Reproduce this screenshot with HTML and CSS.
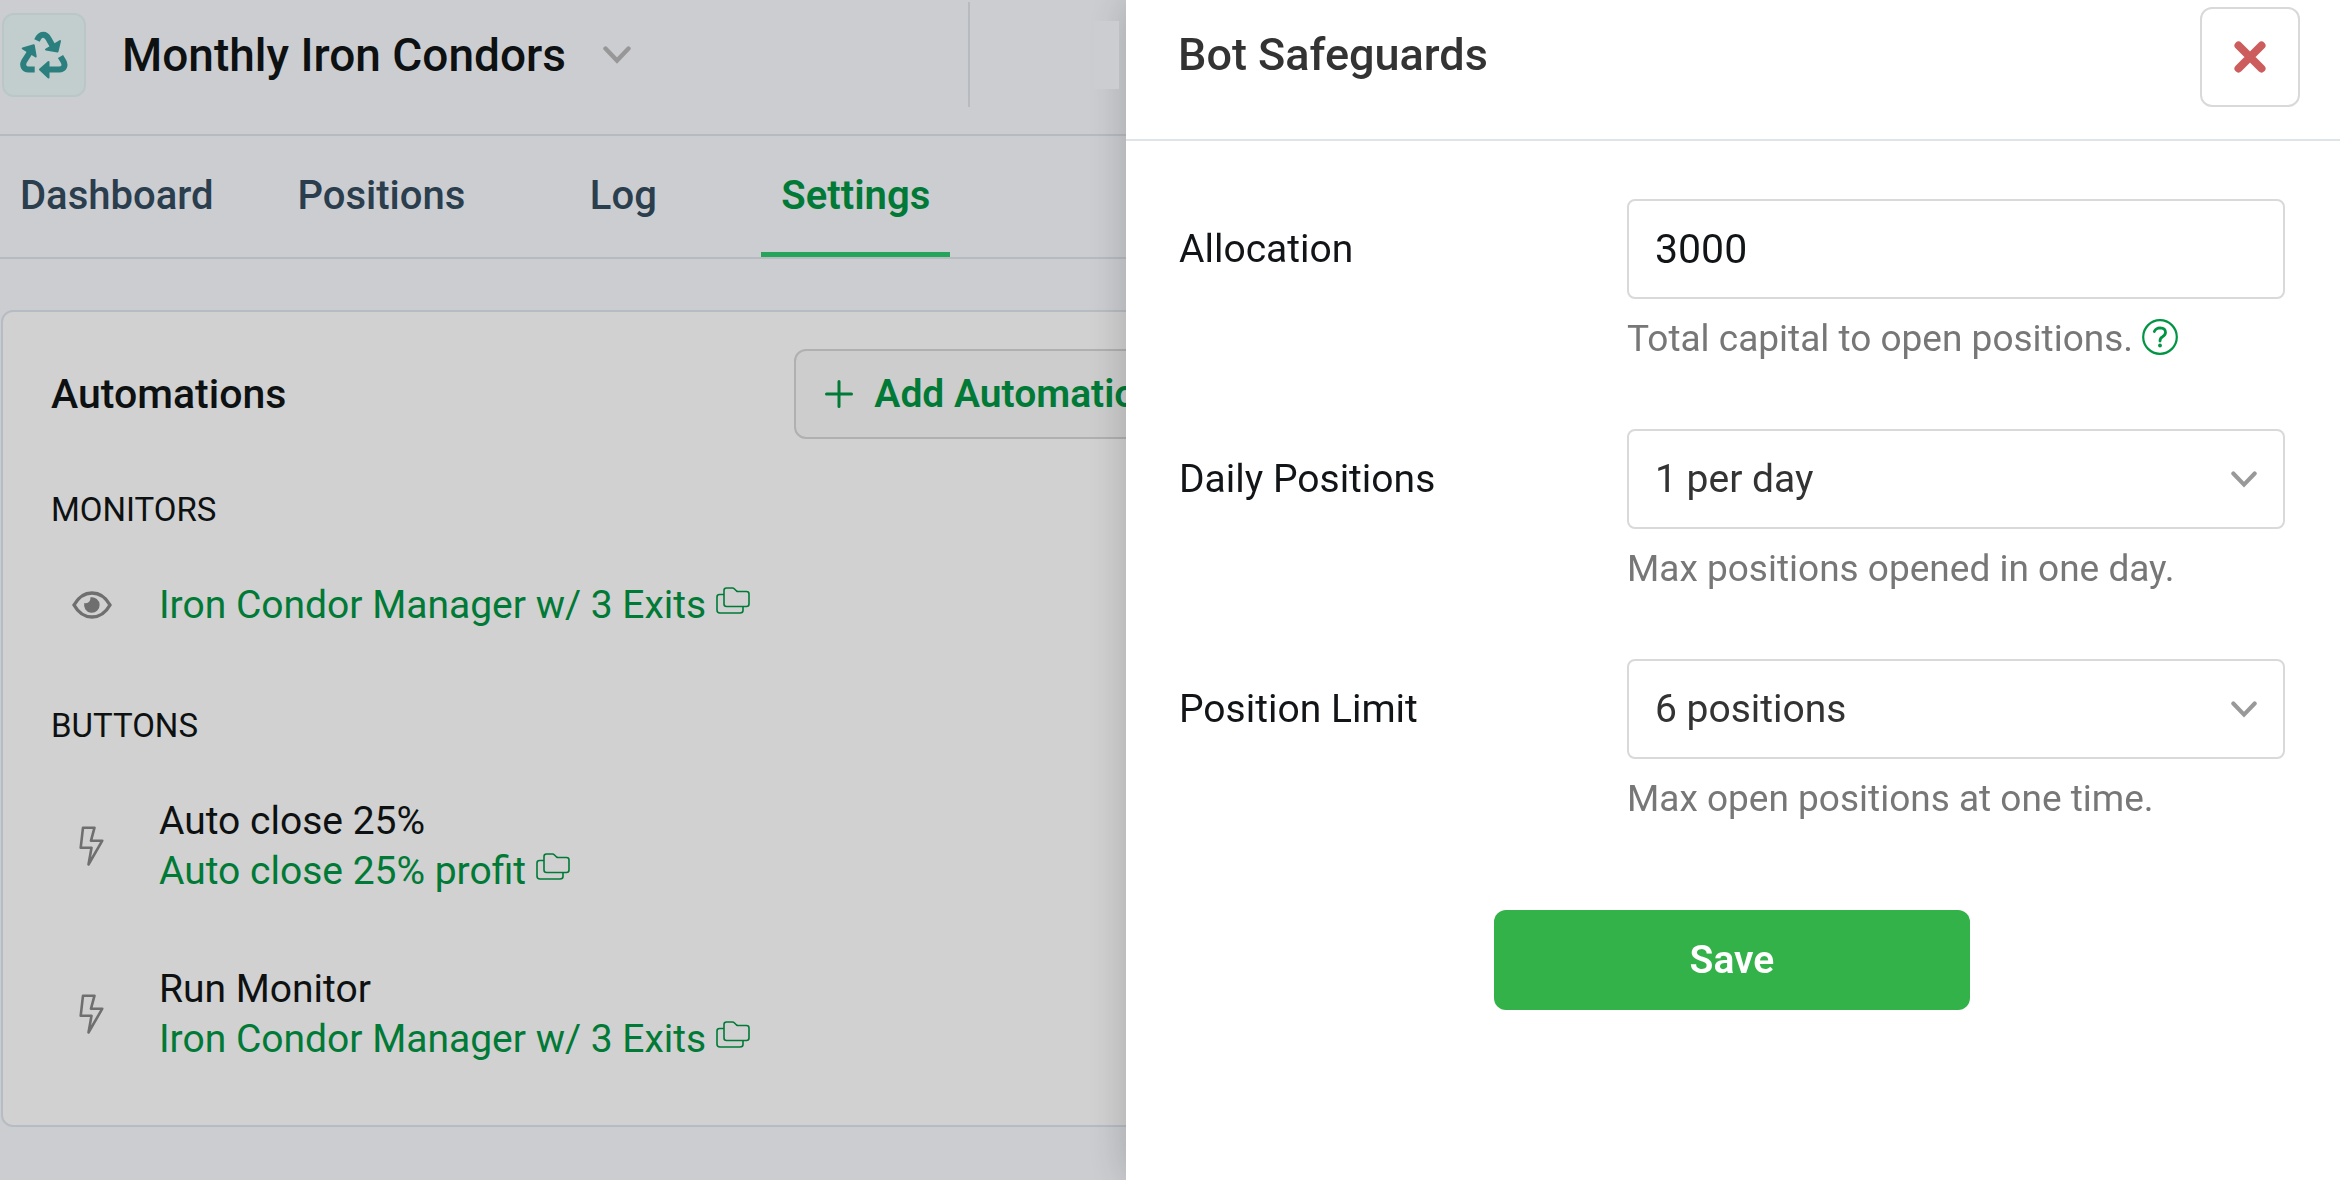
FILE: index.html
```
<!DOCTYPE html>
<html lang="en">
<head>
  <meta charset="UTF-8" />
  <meta name="viewport" content="width=device-width, initial-scale=1" />
  <title>Monthly Iron Condors - Settings</title>
  <link rel="stylesheet" href="styles.css">
</head>
<body>
  <!-- Shared icons -->
  <svg class="sprite" aria-hidden="true">
    <symbol id="folders" viewBox="0 0 34 27">
      <path d="M8 7.500H3.500q-2.500 0-2.500 2.500v13q0 3 3 3h20q3 0 3-2.500v-4.500M8 3.500q0-2.500 2.500-2.500h6q1 0 2 1l2 2q.700.500 1.500.500h8.500q2.500 0 2.500 2.500v10q0 2.500-2.500 2.500h-20q-2.500 0-2.500-2.500z" fill="none" stroke="currentColor" stroke-width="1.600" />
    </symbol>
    <symbol id="chevron" viewBox="0 0 28 18">
      <path d="M2.500 2.500L14 14.500L25.500 2.500" fill="none" stroke="currentColor" stroke-width="4.400" stroke-linecap="round" />
    </symbol>
    <symbol id="bolt" viewBox="0 0 25 40">
      <path d="M4 1.700H15.500L12 14.700H23.300L9.500 38.500L12.500 21.800H1.700Z" fill="none" stroke="currentColor" stroke-width="2.600" stroke-linejoin="round" />
    </symbol>
  </svg>

  <main class="page">
    <header class="bot-header">
      <div class="bot-icon">
        <svg viewBox="0 0 48 48" width="48" height="48" aria-hidden="true">
          <g fill="none" stroke="#369b9b" stroke-width="6">
            <path d="M17 9.500C18.500 6 20 3.800 23 3.800C26 3.800 27.700 6 28.700 8L33 15.500" />
            <path d="M14.700 38.500H8.500C4 38.500 2 34.500 4 30.500L11 19.500" />
            <path d="M28 38.500H39C44.500 38.500 45.500 34 43.500 30.500L40.500 25.500" />
          </g>
          <g fill="#369b9b" stroke="#369b9b" stroke-width="2" stroke-linejoin="round">
            <path d="M37.500 20.500L40 10L26 18.500Z" />
            <path d="M13.800 14.300L2.700 17.500L15.700 25.500Z" />
            <path d="M20 38.500L28.500 31V46.500Z" />
          </g>
        </svg>
      </div>
      <h1>Monthly Iron Condors</h1>
      <svg class="title-chevron" aria-hidden="true"><use href="#chevron" /></svg>
      <div class="bot-stats"><span class="stat-slot"></span></div>
    </header>

    <nav class="tabs">
      <a href="#dashboard">Dashboard</a>
      <a href="#positions">Positions</a>
      <a href="#log">Log</a>
      <a href="#settings" class="active">Settings</a>
    </nav>

    <section class="card">
      <div class="card-head">
        <h2>Automations</h2>
        <button type="button" class="btn-add">
          <svg viewBox="0 0 28 28" width="28" height="28" aria-hidden="true"><path d="M14 1.500V26.500M1.500 14H26.500" fill="none" stroke="currentColor" stroke-width="3" stroke-linecap="round" /></svg>
          Add Automation
        </button>
      </div>

      <h3>MONITORS</h3>
      <div class="item">
        <span class="item-icon">
          <svg viewBox="0 0 40 28" width="40" height="28" aria-hidden="true">
            <path d="M2 14C11-2 29-2 38 14C29 30 11 30 2 14Z" fill="none" stroke="currentColor" stroke-width="3.400" />
            <path d="M18.500 6.300A7.800 7.800 0 1 1 12.300 12Q18.500 13 18.500 6.300Z" fill="currentColor" />
          </svg>
        </span>
        <div>
          <a href="#monitor">Iron Condor Manager w/ 3 Exits<svg class="folders" aria-hidden="true"><use href="#folders" /></svg></a>
        </div>
      </div>

      <h3 class="spaced">BUTTONS</h3>
      <div class="item">
        <span class="item-icon"><svg class="bolt" aria-hidden="true"><use href="#bolt" /></svg></span>
        <div>
          <p>Auto close 25%</p>
          <a href="#auto-close">Auto close 25% profit<svg class="folders" aria-hidden="true"><use href="#folders" /></svg></a>
        </div>
      </div>
      <div class="item">
        <span class="item-icon"><svg class="bolt" aria-hidden="true"><use href="#bolt" /></svg></span>
        <div>
          <p>Run Monitor</p>
          <a href="#monitor">Iron Condor Manager w/ 3 Exits<svg class="folders" aria-hidden="true"><use href="#folders" /></svg></a>
        </div>
      </div>
    </section>
  </main>

  <div class="overlay"></div>

  <aside class="drawer">
    <header class="drawer-head">
      <h2>Bot Safeguards</h2>
      <button type="button" class="btn-close" aria-label="Close">
        <svg viewBox="0 0 32 32" width="32" height="32" aria-hidden="true"><path d="M4.500 4.500L27.500 27.500M27.500 4.500L4.500 27.500" stroke="#cd5c5c" stroke-width="8" stroke-linecap="round" /></svg>
      </button>
    </header>

    <form class="safeguards">
      <div class="field">
        <label for="allocation">Allocation</label>
        <div>
          <input type="text" id="allocation" value="3000">
          <p class="help">Total capital to open positions.
            <svg class="help-icon" viewBox="0 0 36 36" aria-hidden="true">
              <circle cx="18" cy="18" r="16.800" fill="none" stroke="currentColor" stroke-width="2.200" />
              <path d="M12.300 12.500Q14 8.800 18 8.800Q23.500 9 23.500 13.300Q23.500 16 20.500 17.800Q18 19.200 18 22" fill="none" stroke="currentColor" stroke-width="2.800" stroke-linecap="round" />
              <circle cx="18" cy="26.500" r="1.900" fill="currentColor" />
            </svg>
          </p>
        </div>
      </div>

      <div class="field">
        <label for="daily">Daily Positions</label>
        <div>
          <div class="select">
            <select id="daily">
              <option>1 per day</option>
            </select>
            <svg class="select-chevron" aria-hidden="true"><use href="#chevron" /></svg>
          </div>
          <p class="help">Max positions opened in one day.</p>
        </div>
      </div>

      <div class="field">
        <label for="limit">Position Limit</label>
        <div>
          <div class="select">
            <select id="limit">
              <option>6 positions</option>
            </select>
            <svg class="select-chevron" aria-hidden="true"><use href="#chevron" /></svg>
          </div>
          <p class="help">Max open positions at one time.</p>
        </div>
      </div>

      <button type="button" class="btn-save">Save</button>
    </form>
  </aside>
</body>
</html>
```
FILE: styles.css
```
* {
  box-sizing: border-box;
}
body {
  margin: 0;
  min-height: 100vh;
  background: #f9faff;
  color: #121517;
  font-family: Roboto, "Liberation Sans", sans-serif;
  font-size: 39px;
  line-height: 50px;
  overflow-x: hidden;
}
h1, h2, h3, p {
  margin: 0;
}
h1, h2 {
  font-size: 45px;
  font-weight: 500;
}
h1 {
  font-size: 46px;
}
a {
  color: #009543;
  text-decoration: none;
}
button, input, select {
  font-family: inherit;
  font-size: 39px;
}
.sprite {
  position: absolute;
  width: 0;
  height: 0;
}

/* Page behind the drawer */
.page {
  width: 53%;
}
.bot-header {
  display: flex;
  align-items: center;
  padding: 2px 121px 27px 2px;
  border-bottom: 2px solid #e0e4eb;
}
.bot-icon {
  display: flex;
  align-items: center;
  justify-content: center;
  width: 84px;
  height: 84px;
  margin-right: 36px;
  background: #ecfcfa;
  border: 2px solid #e2f4f3;
  border-radius: 12px;
}
.title-chevron {
  width: 30px;
  height: 18px;
  margin-left: 36px;
  color: #b9b9b9;
}
.bot-stats {
  display: flex;
  align-items: center;
  justify-content: flex-end;
  width: 151px;
  height: 105px;
  margin-left: auto;
  border-left: 2px solid #e0e4eb;
}
.stat-slot {
  position: relative;
  z-index: 3;
  width: 25px;
  height: 68px;
  background: #cccdd1;
}
.tabs {
  display: flex;
  gap: 44px;
  border-bottom: 2px solid #e0e4eb;
}
.tabs a {
  min-width: 188px;
  padding: 35px 20px 31px;
  border-bottom: 5px solid transparent;
  color: #344c60;
  font-size: 40px;
  font-weight: 500;
  text-align: center;
}
.tabs a.active {
  border-bottom-color: #30c96f;
  color: #009543;
  font-weight: 600;
}

.card {
  margin: 51px 0 53px 1px;
  padding: 37px 49px 61px 48px;
  background: #fff;
  border: 2px solid #dfe6ee;
  border-radius: 12px;
}
.card-head {
  display: flex;
  align-items: center;
  justify-content: space-between;
}
.card-head h2 {
  font-size: 41px;
}
.card h3 {
  margin: 51px 0 50px;
  font-size: 33px;
  font-weight: 400;
  line-height: 40px;
}
.card h3.spaced {
  margin-top: 76px;
}
.btn-add {
  display: flex;
  align-items: center;
  gap: 21px;
  height: 90px;
  padding: 0 29px;
  background: #fafafa;
  border: 2px solid #d7d7d7;
  border-radius: 12px;
  color: #009543;
  font-weight: 600;
}
.item {
  display: flex;
  align-items: center;
  gap: 27px;
}
.item + .item {
  margin-top: 68px;
}
.item-icon {
  display: flex;
  justify-content: center;
  width: 81px;
  color: #888;
}
.bolt {
  width: 25px;
  height: 40px;
}
.item a {
  display: block;
}
.folders {
  width: 34px;
  height: 27px;
  margin-left: 10px;
  vertical-align: 4px;
}

.overlay {
  position: fixed;
  inset: 0;
  z-index: 1;
  background: rgba(0, 0, 0, 0.18);
}

/* Drawer */
.drawer {
  position: fixed;
  top: 0;
  right: 0;
  bottom: 0;
  z-index: 2;
  width: calc(50% + 44px);
  background: #fff;
  box-shadow: 0 0 40px rgba(0, 0, 0, 0.2);
}
.drawer-head {
  display: flex;
  align-items: center;
  justify-content: space-between;
  padding: 7px 40px 32px 52px;
  border-bottom: 2px solid #dfe4e9;
}
.drawer-head h2 {
  padding-bottom: 5px;
  color: #333;
}
.btn-close {
  display: flex;
  align-items: center;
  justify-content: center;
  width: 100px;
  height: 100px;
  padding: 0;
  background: #fff;
  border: 2px solid #d9d9d9;
  border-radius: 12px;
}
.safeguards {
  padding: 58px 55px 58px 53px;
}
.field {
  display: grid;
  grid-template-columns: 448px 1fr;
  margin-bottom: 65px;
}
.field label {
  line-height: 100px;
}
.field input, .field select {
  display: block;
  width: 100%;
  height: 100px;
  padding: 0 26px;
  appearance: none;
  background: #fff;
  border: 2px solid #d9d9d9;
  border-radius: 8px;
  color: #333;
}
.field input {
  color: #121517;
  font-size: 41px;
}
.select {
  position: relative;
}
.select-chevron {
  position: absolute;
  top: 42px;
  right: 28px;
  width: 26px;
  height: 17px;
  color: #999;
  pointer-events: none;
}
.help {
  padding-top: 15px;
  color: #777;
  font-size: 37px;
}
.help-icon {
  width: 36px;
  height: 36px;
  color: #009543;
  vertical-align: -4px;
}
.btn-save {
  display: block;
  width: 43%;
  height: 100px;
  margin: 86px auto 0;
  background: #34b24a;
  border: none;
  border-radius: 12px;
  color: #fff;
  font-weight: 600;
}
```
